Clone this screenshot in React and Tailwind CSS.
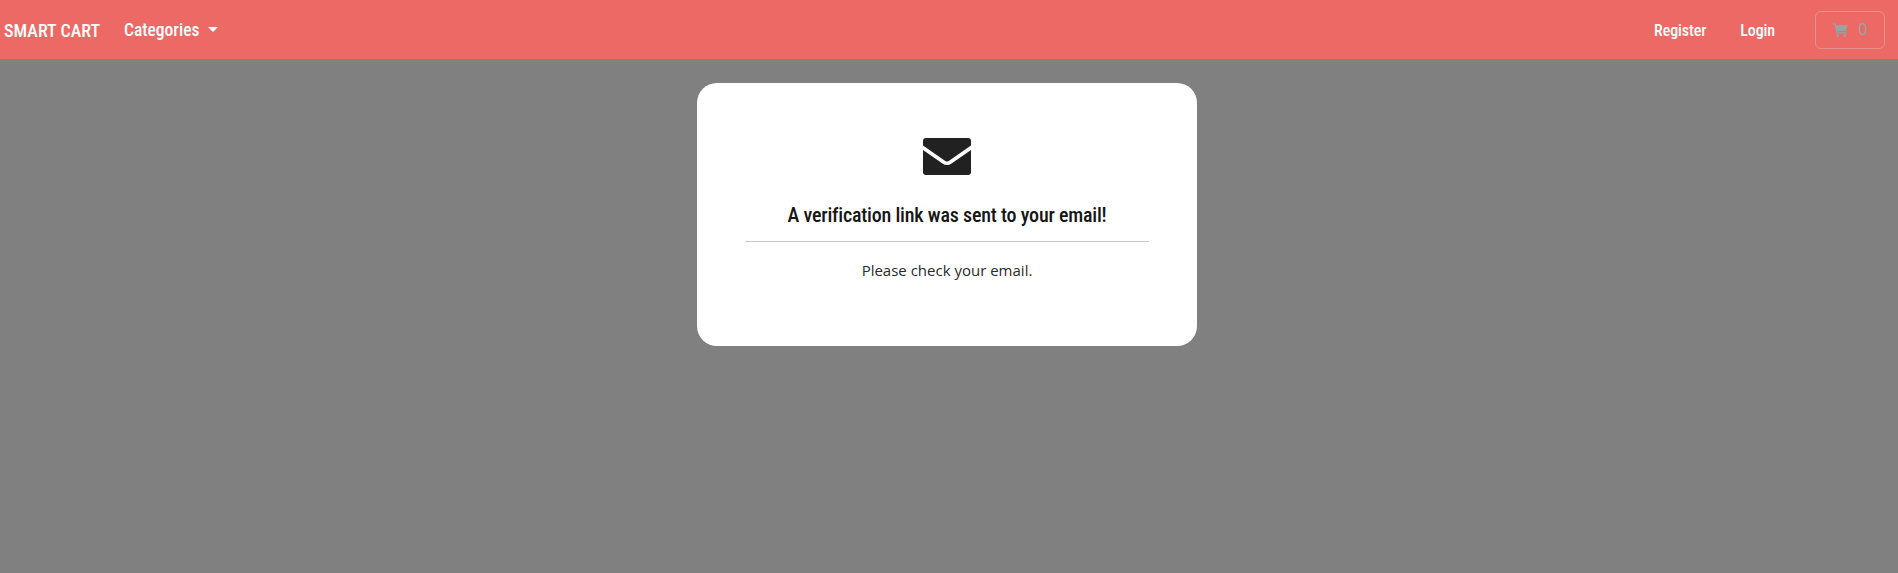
import React from "react";

const narrow = "font-['Roboto',sans-serif] [font-stretch:75%]";

function Envelope() {
  return (
    <svg width="48" height="37" viewBox="0 0 48 37" className="block">
      <rect x="0" y="0" width="48" height="37" rx="3" fill="#212121" />
      <path d="M-1 9 L20.5 24 Q24 26.5 27.5 24 L49 9" fill="none" stroke="#fff" strokeWidth="3.6" />
    </svg>
  );
}

function Cart() {
  return (
    <svg width="15" height="14" viewBox="0 0 15 14" fill="#98a3a6" className="block">
      <path d="M0 0.5h2.6l.5 1.6h11.4l-1.4 6H4.3l.3 1.2h8.9v1.2H3.3L1.7 1.7H0z" />
      <circle cx="4.6" cy="12.6" r="1.3" />
      <circle cx="11.8" cy="12.6" r="1.3" />
    </svg>
  );
}

export default function App() {
  return (
    <div className="min-h-[573px] bg-[#808080] flex flex-col">
      <nav className={`h-[59px] bg-[#ec6965] flex items-center text-white font-medium ${narrow}`}>
        <a className="ml-[4px] text-[18px] leading-none pt-[3px]">SMART CART</a>
        <a className="ml-6 text-[17.5px] leading-none flex items-center pt-[2px]">
          Categories
          <span className="ml-[9px] mb-[3px] w-0 h-0 border-x-[5.5px] border-x-transparent border-t-[5.5px] border-t-white" />
        </a>
        <div className="ml-auto flex items-center">
          <a className="text-[16px] tracking-[-0.1px] leading-none pt-[3px]">Register</a>
          <a className="ml-[34px] text-[16px] tracking-[-0.1px] leading-none pt-[3px]">Login</a>
          <button className="ml-[40px] mr-[13px] w-[70px] h-[38px] rounded-[6px] border border-[#e98f8a] flex items-center justify-center gap-[11px] text-[#98a3a6] text-[16px] font-normal font-['Liberation_Sans',sans-serif]">
            <Cart />
            <span>0</span>
          </button>
        </div>
      </nav>
      <main className="flex justify-center pt-6 pr-1">
        <div className="w-[500px] h-[263px] bg-white rounded-[20px] px-12 pt-[55px] flex flex-col items-center">
          <Envelope />
          <h2 className={`mt-[26px] text-[20px] leading-[28px] tracking-[-0.2px] font-medium text-[#161616] ${narrow}`}>
            A verification link was sent to your email!
          </h2>
          <div className="mt-[12px] w-full h-px bg-[#c8c8c8]" />
          <p className="mt-[18px] text-[15px] leading-[20px] text-[#2a2a2a] font-['Open_Sans',sans-serif]">
            Please check your email.
          </p>
        </div>
      </main>
    </div>
  );
}
